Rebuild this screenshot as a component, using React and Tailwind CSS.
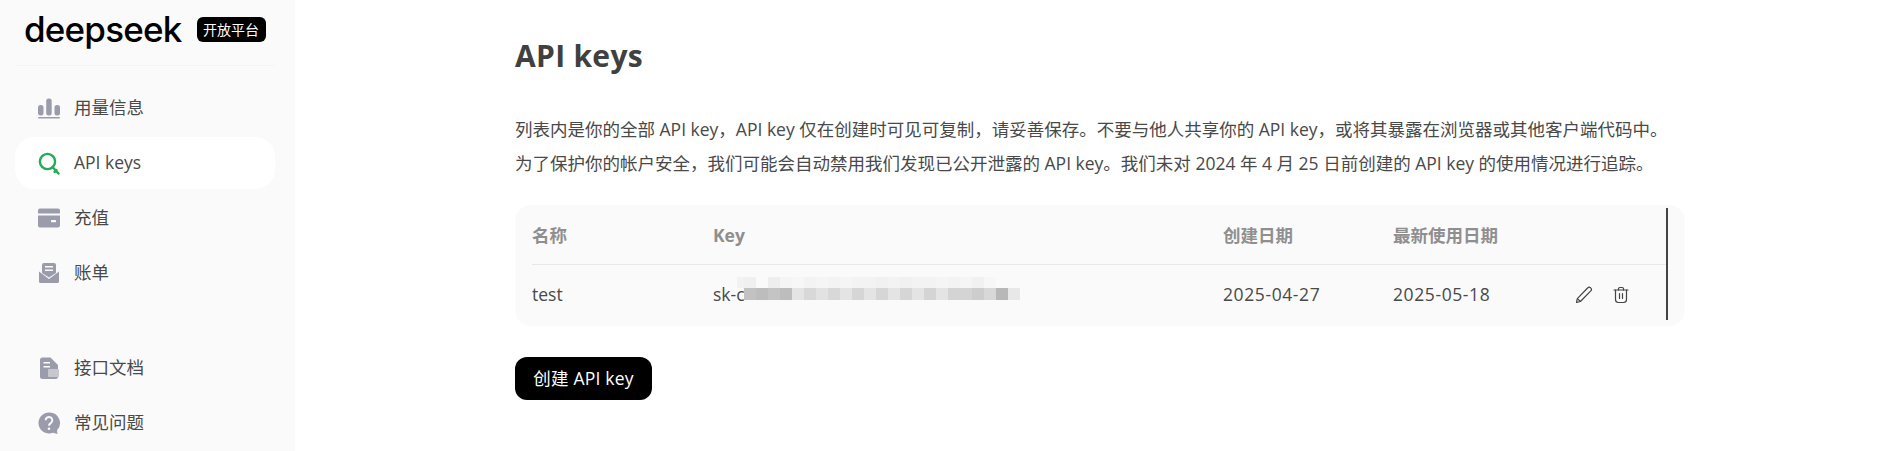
import React from "react";

const font = "font-['Open_Sans','Noto_Sans_CJK_SC',sans-serif]";

const topCells = [
  "bg-[#f0f0f0]", "bg-[#fafafa]", "bg-[#eeeeee]", "bg-[#f5f5f5]", "bg-[#f7f7f7]", "bg-[#f3f3f3]", "bg-[#f5f5f5]", "bg-[#f3f3f3]",
  "bg-[#f5f5f5]", "bg-[#f3f3f3]", "bg-[#f3f3f3]", "bg-[#f1f1f1]", "bg-[#f3f3f3]", "bg-[#f1f1f1]", "bg-[#f3f3f3]", "bg-[#f3f3f3]",
  "bg-[#f5f5f5]", "bg-[#f3f3f3]", "bg-[#f5f5f5]", "bg-[#f1f1f1]", "bg-[#f7f7f7]",
];
const bottomCells = [
  "bg-[#c2c2c2]", "bg-[#bdbdbd]", "bg-[#c4c4c4]", "bg-[#bdbdbd]", "bg-[#e4e4e4]", "bg-[#d8d8d8]", "bg-[#e2e2e2]", "bg-[#d8d8d8]",
  "bg-[#e4e4e4]", "bg-[#d6d6d6]", "bg-[#e4e4e4]", "bg-[#d6d6d6]", "bg-[#e4e4e4]", "bg-[#d6d6d6]", "bg-[#e4e4e4]", "bg-[#d4d4d4]",
  "bg-[#e4e4e4]", "bg-[#d4d4d4]", "bg-[#d4d4d4]", "bg-[#cdcdcd]", "bg-[#d8d8d8]", "bg-[#b8b8b8]", "bg-[#e8e8e8]",
];

function BarsIcon() {
  return (
    <svg width="24" height="24" viewBox="0 0 24 24" fill="#9a9cac">
      <rect x="1" y="9" width="5.5" height="10.5" rx="2.5" />
      <rect x="9.2" y="2.5" width="5.5" height="17" rx="2.5" />
      <rect x="17.5" y="9" width="5.5" height="10.5" rx="2.5" />
      <rect x="1" y="21" width="22" height="1.6" rx="0.8" />
    </svg>
  );
}

function KeyIcon() {
  return (
    <svg width="24" height="24" viewBox="0 0 24 24" fill="none" stroke="#22ac55" strokeWidth="2.4">
      <circle cx="10.5" cy="10.5" r="7.6" />
      <path d="M15.5 16 L21.5 22.5 M17.6 20.8 L19.4 19" strokeLinecap="round" />
    </svg>
  );
}

function CardIcon() {
  return (
    <svg width="24" height="24" viewBox="0 0 24 24">
      <rect x="1" y="2.5" width="22" height="19" rx="2" fill="#9a9cac" />
      <rect x="1" y="7.5" width="22" height="2" fill="#fafafa" />
      <rect x="14" y="14" width="5" height="2.2" rx="0.5" fill="#fafafa" />
    </svg>
  );
}

function MailIcon() {
  return (
    <svg width="24" height="24" viewBox="0 0 24 24">
      <path d="M5 4 a2 2 0 0 1 2-2 h10 a2 2 0 0 1 2 2 v8 l-7 4.5 L5 12 z" fill="#9a9cac" />
      <rect x="8" y="5" width="8" height="1.5" fill="#fafafa" />
      <rect x="8" y="8.5" width="8" height="1.5" fill="#fafafa" />
      <path d="M2 10.5 L12 18 L22 10.5 V20.5 a1.5 1.5 0 0 1-1.5 1.5 h-17 A1.5 1.5 0 0 1 2 20.5 z" fill="#9a9cac" />
    </svg>
  );
}

function DocIcon() {
  return (
    <svg width="24" height="24" viewBox="0 0 24 24">
      <path d="M3 4 a2.5 2.5 0 0 1 2.5-2.5 h8 L21 9 v11.5 a2.5 2.5 0 0 1-2.5 2.5 h-13 A2.5 2.5 0 0 1 3 20.5 z" fill="#9a9cac" />
      <rect x="6.5" y="6" width="6.5" height="1.5" fill="#fafafa" />
      <rect x="6.5" y="10" width="6.5" height="1.5" fill="#fafafa" />
      <rect x="11" y="13" width="11" height="8" rx="1" fill="#c6c7cf" />
    </svg>
  );
}

function HelpIcon() {
  return (
    <svg width="24" height="24" viewBox="0 0 24 24">
      <path d="M12 1.5 a10.5 10.5 0 1 0 4 20.2 L20.5 23 L20 19.3 A10.5 10.5 0 0 0 12 1.5 z" fill="#9a9cac" />
      <path d="M8.7 9.3 a3.3 3.3 0 1 1 5 2.8 c-1.2 .8-1.7 1.3-1.7 2.7" fill="none" stroke="#fafafa" strokeWidth="2" />
      <circle cx="12" cy="17.8" r="1.3" fill="#fafafa" />
    </svg>
  );
}

function PencilIcon() {
  return (
    <svg width="18" height="18" viewBox="0 0 18 18" fill="none" stroke="#444" strokeWidth="1.2" strokeLinejoin="round">
      <path d="M1.5 16.5 L2.3 12.6 L12.6 2 A1.9 1.9 0 0 1 15.8 4.9 L5.4 15.5 z" />
      <path d="M2.3 12.6 L5.4 15.5" />
    </svg>
  );
}

function TrashIcon() {
  return (
    <svg width="18" height="18" viewBox="0 0 18 18" fill="none" stroke="#444" strokeWidth="1.2" strokeLinecap="round">
      <path d="M2 4 H16" />
      <path d="M6.5 4 V2.8 A1.3 1.3 0 0 1 7.8 1.5 H10.2 A1.3 1.3 0 0 1 11.5 2.8 V4" />
      <path d="M3.5 4 V13.5 A3 3 0 0 0 6.5 16.5 H11.5 A3 3 0 0 0 14.5 13.5 V4" />
      <path d="M7.5 7.5 V12.5 M10.5 7.5 V12.5" />
    </svg>
  );
}

function NavItem({ icon, label, active, className = "" }) {
  return (
    <div
      className={`flex h-[52px] items-center gap-[13px] rounded-[20px] pl-[22px] text-[17.5px] text-[#494949] ${
        active ? "bg-white" : ""
      } ${className}`}
    >
      <span className="flex h-6 w-[24px] shrink-0 items-center justify-center">{icon}</span>
      <span className="-mt-[2px]">{label}</span>
    </div>
  );
}

export default function App() {
  return (
    <div className={`flex h-[451px] w-[1897px] overflow-hidden bg-white ${font}`}>
      <aside className="h-full w-[295px] shrink-0 bg-[#fafafa] pr-[20px] pl-[15px]">
        <div className="flex h-[66px] items-center gap-[15px] border-b border-[#f4f4f4] pb-[6px] pl-[9px]">
          <span className="font-['Inter',sans-serif] text-[35px] leading-none font-medium tracking-[-0.8px] text-black">
            deepseek
          </span>
          <span className="flex h-[25px] w-[69px] items-center justify-center rounded-[6px] bg-black text-[14px] leading-none text-white">
            开放平台
          </span>
        </div>
        <nav className="mt-[16px] flex flex-col gap-[3px]">
          <NavItem icon={<BarsIcon />} label="用量信息" />
          <NavItem icon={<KeyIcon />} label="API keys" active />
          <NavItem icon={<CardIcon />} label="充值" />
          <NavItem icon={<MailIcon />} label="账单" />
          <NavItem icon={<DocIcon />} label="接口文档" className="mt-[40px]" />
          <NavItem icon={<HelpIcon />} label="常见问题" />
        </nav>
      </aside>

      <main className="pt-[32px] pl-[220px]">
        <h1 className="text-[30px] leading-[48px] font-bold tracking-[0.3px] text-[#404040]">API keys</h1>
        <p className="mt-[32px] w-[1250px] text-[17.5px] leading-[34px] text-[#494949]">
          列表内是你的全部 API key，API key 仅在创建时可见可复制，请妥善保存。不要与他人共享你的 API key，或将其暴露在浏览器或其他客户端代码中。
          <br />
          为了保护你的帐户安全，我们可能会自动禁用我们发现已公开泄露的 API key。我们未对 2024 年 4 月 25 日前创建的 API key 的使用情况进行追踪。
        </p>

        <div className="relative mt-[25px] h-[121px] w-[1170px] rounded-[16px] bg-[#fafafa] pl-[17px] text-[17.5px]">
          <div className="grid h-[60px] w-[1134px] grid-cols-[181px_510px_170px_1fr] items-center border-b border-[#e8e8e8] pt-[2px] font-bold text-[#8f8f8f]">
            <span>名称</span>
            <span>Key</span>
            <span>创建日期</span>
            <span>最新使用日期</span>
          </div>
          <div className="grid h-[59px] w-[1134px] grid-cols-[181px_510px_170px_182px_1fr] items-center text-[#494949]">
            <span>test</span>
            <span>sk-c</span>
            <span className="tracking-[0.6px]">2025-04-27</span>
            <span className="tracking-[0.6px]">2025-05-18</span>
            <span className="flex items-center gap-[19px]">
              <PencilIcon />
              <TrashIcon />
            </span>
          </div>
          {/* masked key */}
          <div className="absolute top-[72px] left-[222px] flex w-[290px] flex-col">
            <div className="flex h-[11px]">
              <div className="h-full w-[7px] bg-[#f2f2f2]" />
              {topCells.map((c, i) => (
                <div key={i} className={`h-full w-[12px] ${c}`} />
              ))}
            </div>
            <div className="flex h-[12px] pl-[7px]">
              {bottomCells.map((c, i) => (
                <div key={i} className={`h-full w-[12px] ${c}`} />
              ))}
            </div>
          </div>
          <div className="absolute top-[3px] right-[17px] h-[112px] w-[2px] bg-[#444]" />
        </div>

        <button className="mt-[31px] flex h-[43px] w-[137px] items-center justify-center rounded-[12px] bg-black text-[17.5px] tracking-[0.2px] text-white">
          创建 API key
        </button>
      </main>
    </div>
  );
}
